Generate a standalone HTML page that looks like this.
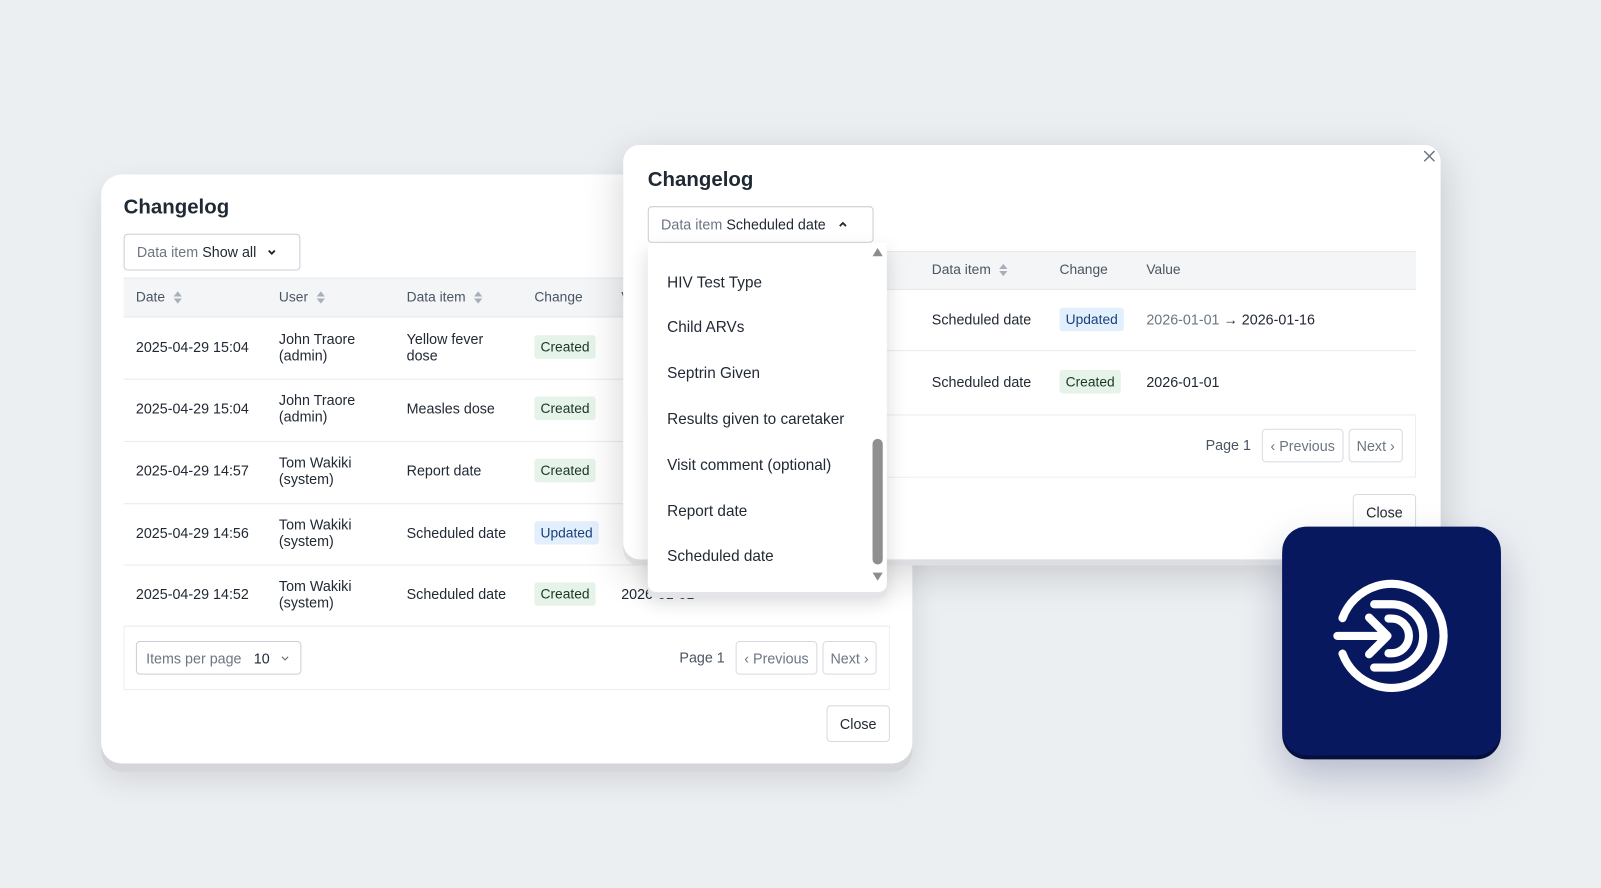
<!DOCTYPE html>
<html><head><meta charset="utf-8"><style>
*{box-sizing:border-box;margin:0;padding:0}
html,body{width:1601px;height:888px;overflow:hidden;background:#eceff2;font-family:"Liberation Sans",sans-serif;color:#212934}
#root{position:absolute;left:0;top:0;width:1567px;height:870px;transform:scale(1.0217,1.0207);transform-origin:0 0}
.abs{position:absolute}
.card{position:absolute;background:#fff;border-radius:20px}
.title{position:absolute;font-size:20px;font-weight:bold;color:#1f2933}
.sel{position:absolute;border:1px solid #c9ced6;border-radius:4px;font-size:14px;color:#212934;display:flex;align-items:center;padding-left:12px;background:#fff}
.sel .l{color:#6b7683;margin-right:4px}
.th{position:absolute;background:#f3f5f7;border-top:1px solid #e6e9ed;border-bottom:1px solid #e6e9ed}
.h{position:absolute;font-size:13.5px;color:#4a5563;transform:translateY(-50%)}
.t{position:absolute;font-size:14px;color:#212934;line-height:16px;transform:translateY(-50%)}
.row{position:absolute;height:1px;background:#e8ebef}
.bdg{position:absolute;font-size:13.5px;padding:4px 6px;border-radius:3px;transform:translateY(-50%)}
.cr{background:#e5f3e8;color:#1d3524}
.up{background:#e2effc;color:#1a3f7a}
.btn{position:absolute;border:1px solid #d6dae0;border-radius:4px;font-size:14px;color:#6b7683;display:flex;align-items:center;justify-content:center;background:#fff}
.sort{display:inline-block;margin-left:8px;vertical-align:middle;width:8px;height:12px;position:relative}
.sort:before,.sort:after{content:"";position:absolute;left:0;border-left:4px solid transparent;border-right:4px solid transparent}
.sort:before{top:0;border-bottom:5px solid #a7afba}
.sort:after{bottom:0;border-top:5px solid #a7afba}
.dd{position:absolute;font-size:15px;color:#212934;transform:translateY(-50%)}
</style></head><body><div id="root">

<!-- LEFT CARD -->
<div class="card" style="left:99px;top:171px;width:794px;height:577px;box-shadow:0 8px 0 #d4d6d9,0 14px 30px rgba(0,0,0,.12)"></div>
<div class="title" style="left:121px;top:192px">Changelog</div>
<div class="sel" style="left:121px;top:229px;width:173px;height:36px"><span class="l">Data item</span>Show all<svg width="10" height="8" style="margin-left:10px" viewBox="0 0 10 8"><path d="M2 2.5l3 3 3-3" fill="none" stroke="#212934" stroke-width="1.8"/></svg></div>
<div class="th" style="left:121px;top:272px;width:750px;height:39px"></div>
<div class="h" style="left:133px;top:291px">Date<span class="sort"></span></div>
<div class="h" style="left:273px;top:291px">User<span class="sort"></span></div>
<div class="h" style="left:398px;top:291px">Data item<span class="sort"></span></div>
<div class="h" style="left:523px;top:291px">Change</div>
<div class="h" style="left:608px;top:291px">V</div>

<div class="t" style="left:133px;top:340px">2025-04-29 15:04</div><div class="t" style="left:273px;top:340px">John Traore<br>(admin)</div><div class="t" style="left:398px;top:340px">Yellow fever<br>dose</div><div class="bdg cr" style="left:523px;top:340px">Created</div>
<div class="row" style="left:121px;top:371px;width:750px"></div>
<div class="t" style="left:133px;top:400px">2025-04-29 15:04</div><div class="t" style="left:273px;top:400px">John Traore<br>(admin)</div><div class="t" style="left:398px;top:400px">Measles dose</div><div class="bdg cr" style="left:523px;top:400px">Created</div>
<div class="row" style="left:121px;top:432px;width:750px"></div>
<div class="t" style="left:133px;top:461px">2025-04-29 14:57</div><div class="t" style="left:273px;top:461px">Tom Wakiki<br>(system)</div><div class="t" style="left:398px;top:461px">Report date</div><div class="bdg cr" style="left:523px;top:461px">Created</div>
<div class="row" style="left:121px;top:493px;width:750px"></div>
<div class="t" style="left:133px;top:522px">2025-04-29 14:56</div><div class="t" style="left:273px;top:522px">Tom Wakiki<br>(system)</div><div class="t" style="left:398px;top:522px">Scheduled date</div><div class="bdg up" style="left:523px;top:522px">Updated</div>
<div class="row" style="left:121px;top:553px;width:750px"></div>
<div class="t" style="left:133px;top:582px">2025-04-29 14:52</div><div class="t" style="left:273px;top:582px">Tom Wakiki<br>(system)</div><div class="t" style="left:398px;top:582px">Scheduled date</div><div class="bdg cr" style="left:523px;top:582px">Created</div><div class="t" style="left:608px;top:582px">2026-01-01</div>
<div class="row" style="left:121px;top:613px;width:750px"></div>
<div class="abs" style="left:121px;top:613px;width:750px;height:63px;border:1px solid #eceef1;border-top:none"></div>
<div class="sel" style="left:133px;top:628px;width:162px;height:33px;color:#6b7683;padding-left:9px">Items per page<span style="color:#212934;margin-left:12px">10</span><svg width="10" height="8" style="margin-left:10px" viewBox="0 0 10 8"><path d="M2 2.5l3 3 3-3" fill="none" stroke="#6b7683" stroke-width="1.2"/></svg></div>
<div class="t" style="left:665px;top:644px;color:#4a5563">Page 1</div>
<div class="btn" style="left:720px;top:628px;width:80px;height:33px">‹ Previous</div>
<div class="btn" style="left:805px;top:628px;width:53px;height:33px">Next ›</div>
<div class="btn" style="left:809px;top:691px;width:62px;height:36px;color:#212934">Close</div>

<!-- RIGHT CARD -->
<div class="card" style="left:610px;top:142px;width:800px;height:406px;border-radius:16px;box-shadow:0 6px 0 #dcdee1,0 12px 40px rgba(0,0,0,.18)"></div>
<svg class="abs" style="left:1393px;top:147px" width="12" height="12" viewBox="0 0 12 12"><path d="M1 1l10 10M11 1L1 11" stroke="#6b7683" stroke-width="1.4"/></svg>
<div class="title" style="left:634px;top:165px">Changelog</div>
<div class="sel" style="left:634px;top:202px;width:221px;height:36px"><span class="l">Data item</span>Scheduled date<svg width="10" height="8" style="margin-left:12px" viewBox="0 0 10 8"><path d="M2 5.5l3-3 3 3" fill="none" stroke="#212934" stroke-width="1.8"/></svg></div>
<div class="th" style="left:634px;top:246px;width:752px;height:38px"></div>
<div class="h" style="left:912px;top:264px">Data item<span class="sort"></span></div>
<div class="h" style="left:1037px;top:264px">Change</div>
<div class="h" style="left:1122px;top:264px">Value</div>
<div class="t" style="left:912px;top:313px">Scheduled date</div><div class="bdg up" style="left:1037px;top:313px">Updated</div><div class="t" style="left:1122px;top:313px"><span style="color:#6b7683">2026-01-01</span> → 2026-01-16</div>
<div class="row" style="left:634px;top:343px;width:752px"></div>
<div class="t" style="left:912px;top:374px">Scheduled date</div><div class="bdg cr" style="left:1037px;top:374px">Created</div><div class="t" style="left:1122px;top:374px">2026-01-01</div>
<div class="row" style="left:634px;top:406px;width:752px"></div>
<div class="abs" style="left:634px;top:406px;width:752px;height:62px;border:1px solid #eceef1;border-top:none"></div>
<div class="t" style="left:1180px;top:436px;color:#4a5563">Page 1</div>
<div class="btn" style="left:1235px;top:420px;width:80px;height:33px">‹ Previous</div>
<div class="btn" style="left:1320px;top:420px;width:53px;height:33px">Next ›</div>
<div class="btn" style="left:1324px;top:484px;width:62px;height:36px;color:#212934">Close</div>

<!-- DROPDOWN -->
<div class="abs" style="left:634px;top:238px;width:234px;height:342px;background:#fff;border-radius:0 0 8px 8px;box-shadow:0 6px 0 #e3e5e8,0 8px 20px rgba(0,0,0,.15)"></div>
<div class="dd" style="left:653px;top:277px">HIV Test Type</div>
<div class="dd" style="left:653px;top:321px">Child ARVs</div>
<div class="dd" style="left:653px;top:366px">Septrin Given</div>
<div class="dd" style="left:653px;top:411px">Results given to caretaker</div>
<div class="dd" style="left:653px;top:456px">Visit comment (optional)</div>
<div class="dd" style="left:653px;top:501px">Report date</div>
<div class="dd" style="left:653px;top:545px">Scheduled date</div>
<div class="abs" style="left:854px;top:243px;width:0;height:0;border-left:5px solid transparent;border-right:5px solid transparent;border-bottom:8px solid #8d8d8d"></div>
<div class="abs" style="left:854px;top:430px;width:10px;height:123px;background:#8f8f8f;border-radius:5px"></div>
<div class="abs" style="left:854px;top:561px;width:0;height:0;border-left:5px solid transparent;border-right:5px solid transparent;border-top:8px solid #8d8d8d"></div>

<!-- LOGO -->
<div class="abs" style="left:1255px;top:516px;width:214px;height:224px;background:#08185f;border-radius:24px;box-shadow:0 4px 0 #050f3e,0 20px 40px rgba(20,30,90,.25)">
<svg width="214" height="214" viewBox="0 0 214 214"><g fill="none" stroke="#fff" stroke-width="8" stroke-linecap="round" stroke-linejoin="round">
<path d="M59 89.6A51 51 0 1 1 59 124.4"/>
<path d="M90 76H107A31 31 0 0 1 107 138H90"/>
<path d="M104 90H107A17 17 0 0 1 107 124H104"/>
<path d="M54 107H103M85 89L103 107L85 125"/>
</g></svg></div>

</div></body></html>
